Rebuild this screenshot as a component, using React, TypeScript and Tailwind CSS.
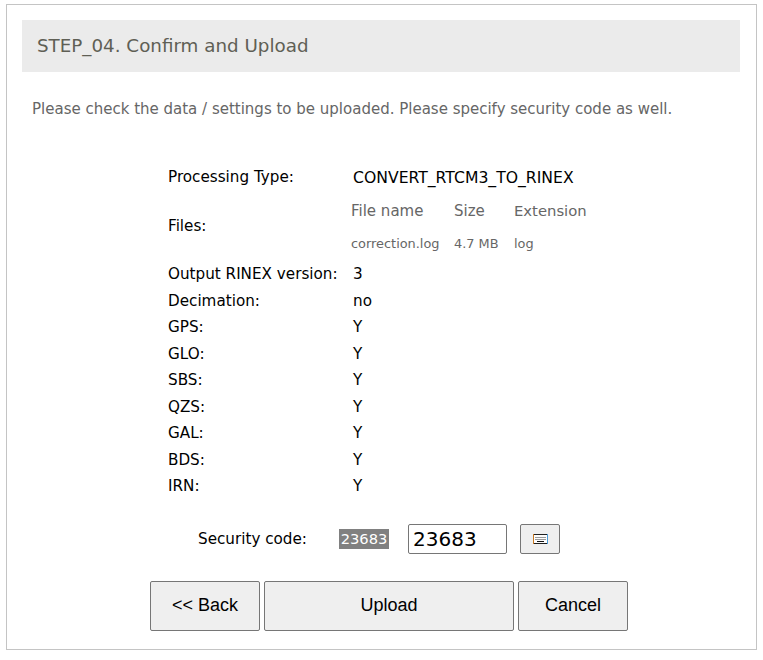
export default function App() {
  const rows: [string, string][] = [
    ["Decimation:", "no"],
    ["GPS:", "Y"],
    ["GLO:", "Y"],
    ["SBS:", "Y"],
    ["QZS:", "Y"],
    ["GAL:", "Y"],
    ["BDS:", "Y"],
    ["IRN:", "Y"],
  ];
  return (
    <div className="w-[763px] h-[660px] bg-white pt-[4px] pl-[6px] font-['DejaVu_Sans',sans-serif] text-[15px] text-black">
      <div className="w-[751px] h-[646px] border border-[#c4c4c4] pt-[15px] px-[15px]">
        <div className="w-[718px] h-[52px] bg-[#ebebeb] pl-[15px] flex items-center text-[#5f5f55] text-[18.3px]">
          STEP_04. Confirm and Upload
        </div>
        <p className="mt-[27px] pl-[10px] h-[20px] leading-[20px] text-[#666666] text-[15px]">
          Please check the data / settings to be uploaded. Please specify security code as well.
        </p>
        <div className="mt-[45px] ml-[146px] text-[15.2px]">
          <div className="flex h-[27px] items-center">
            <div className="w-[185px]">Processing Type:</div>
            <div className="text-[15.65px]">CONVERT_RTCM3_TO_RINEX</div>
          </div>
          <div className="flex h-[70px] items-center">
            <div className="w-[183px]">Files:</div>
            <div className="flex flex-col self-start pt-[3px] text-[#666666] text-[15px]">
              <div className="flex h-[35px] items-center">
                <div className="w-[103px]">File name</div>
                <div className="w-[60px]">Size</div>
                <div className="text-[14.8px]">Extension</div>
              </div>
              <div className="flex h-[29px] items-center text-[12.9px]">
                <div className="w-[103px]">correction.log</div>
                <div className="w-[60px]">4.7 MB</div>
                <div>log</div>
              </div>
            </div>
          </div>
          <div className="flex h-[27px] items-center">
            <div className="w-[185px]">Output RINEX version:</div>
            <div>3</div>
          </div>
          {rows.map(([k, v]) => (
            <div key={k} className="flex h-[26.5px] items-center">
              <div className="w-[185px]">{k}</div>
              <div>{v}</div>
            </div>
          ))}
        </div>
        <div className="mt-[24px] ml-[176px] flex items-center h-[30px]">
          <div className="w-[141px] text-[15.2px]">Security code:</div>
          <div className="w-[50px] h-[20px] bg-[#808080] text-white text-[14.7px] leading-[20px] text-center">23683</div>
          <input
            readOnly
            value="23683"
            className="ml-[19px] w-[99px] h-[30px] bg-white border border-[#767676] rounded-[2px] pl-[4px] text-[20px] outline-none"
          />
          <button className="ml-[13px] w-[40px] h-[30px] bg-[#efefef] border border-[#767676] rounded-[2px] flex items-center justify-center">
            <svg width="15" height="10" viewBox="0 0 15 10">
              <rect x="0" y="0" width="15" height="10" fill="#fdfdfd" />
              <path d="M0 0.5h15M0 9.5h15" stroke="#1f1f1f" />
              <path d="M0.5 0v10" stroke="#c8771e" />
              <path d="M14.5 0v10" stroke="#4a9bd8" />
              <path d="M2 3.5h11M2 5.5h11" stroke="#9a9a9a" />
              <path d="M4 7.5h7" stroke="#111" />
            </svg>
          </button>
        </div>
        <div className="mt-[27px] ml-[128px] flex gap-[4px] font-['Liberation_Sans',sans-serif] text-[18px]">
          <button className="w-[110px] h-[50px] pb-[1px] bg-[#efefef] border border-[#767676] rounded-[2px]">&lt;&lt; Back</button>
          <button className="w-[250px] h-[50px] pb-[1px] bg-[#efefef] border border-[#767676] rounded-[2px]">Upload</button>
          <button className="w-[110px] h-[50px] pb-[1px] bg-[#efefef] border border-[#767676] rounded-[2px]">Cancel</button>
        </div>
      </div>
    </div>
  );
}
